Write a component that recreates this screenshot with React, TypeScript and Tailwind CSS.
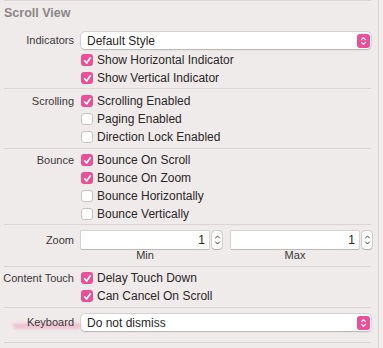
import React from "react";

const FONT = { fontFamily: '"Liberation Sans", Arial, sans-serif' };

function Check({ on }: { on: boolean }) {
  if (on) {
    return (
      <span className="flex h-[12px] w-[12px] shrink-0 items-center justify-center rounded-[3px] bg-[#eb4f97]">
        <svg width="9" height="9" viewBox="0 0 9 9">
          <path d="M1.6 4.8 L3.6 7 L7.4 1.8" fill="none" stroke="#fff" strokeWidth="1.7" strokeLinecap="round" strokeLinejoin="round" />
        </svg>
      </span>
    );
  }
  return <span className="h-[12px] w-[12px] shrink-0 rounded-[3px] border border-[#c9c4c4] bg-white shadow-[inset_0_0.5px_0_rgba(0,0,0,0.05)]" />;
}

function Row({ label, children, h = "h-[18px]" }: { label?: string; children: React.ReactNode; h?: string }) {
  return (
    <div className={`flex ${h} items-center`}>
      <div className="w-[75px] shrink-0 pr-[1px] text-right text-[11px] text-[#3b3838]">{label}</div>
      <div className="ml-[6px] flex flex-1 items-center">{children}</div>
    </div>
  );
}

function CheckRow({ label, text, on }: { label?: string; text: string; on: boolean }) {
  return (
    <Row label={label}>
      <Check on={on} />
      <span className="ml-[4px] text-[12px] text-[#2a2727]">{text}</span>
    </Row>
  );
}

function PinkStepper() {
  return (
    <span className="flex h-[14px] w-[13px] items-center justify-center rounded-[3px] bg-[#eb4f97]">
      <svg width="7" height="10" viewBox="0 0 7 10">
        <path d="M1.5 3.6 L3.5 1.6 L5.5 3.6" fill="none" stroke="#fff" strokeWidth="1.2" strokeLinecap="round" strokeLinejoin="round" />
        <path d="M1.5 6.4 L3.5 8.4 L5.5 6.4" fill="none" stroke="#fff" strokeWidth="1.2" strokeLinecap="round" strokeLinejoin="round" />
      </svg>
    </span>
  );
}

function Popup({ text }: { text: string }) {
  return (
    <div className="flex h-[17px] w-[290px] items-center justify-between rounded-[4px] bg-white pl-[6px] pr-[1.5px] shadow-[0_0_0_0.5px_rgba(0,0,0,0.14),0_0.5px_1.5px_rgba(0,0,0,0.18)]">
      <span className="text-[12px] text-[#2a2727]">{text}</span>
      <PinkStepper />
    </div>
  );
}

function SmallStepper() {
  return (
    <span className="flex h-[18px] w-[10px] flex-col items-center justify-center rounded-[3px] bg-white shadow-[0_0_0_0.5px_rgba(0,0,0,0.22),0_0.5px_1px_rgba(0,0,0,0.15)]">
      <svg width="7" height="14" viewBox="0 0 7 14">
        <path d="M1.5 5 L3.5 3 L5.5 5" fill="none" stroke="#444" strokeWidth="1" strokeLinecap="round" strokeLinejoin="round" />
        <path d="M1.5 9 L3.5 11 L5.5 9" fill="none" stroke="#444" strokeWidth="1" strokeLinecap="round" strokeLinejoin="round" />
      </svg>
    </span>
  );
}

function NumField({ caption }: { caption: string }) {
  return (
    <div className="flex flex-col">
      <div className="flex items-center">
        <div className="flex h-[18px] w-[128px] items-center justify-end bg-white pr-[4px] text-[12px] text-[#2a2727] shadow-[0_0_0_0.5px_rgba(0,0,0,0.2),0_0.5px_0_rgba(0,0,0,0.25)]">
          1
        </div>
        <div className="ml-[3px]">
          <SmallStepper />
        </div>
      </div>
      <div className="flex h-[12px] w-[128px] items-center justify-center text-[11px] leading-[12px] text-[#3b3838]">{caption}</div>
    </div>
  );
}

function Sep() {
  return <div className="ml-[4px] h-px w-[367px] bg-[#dbd5d5]" />;
}

export default function App() {
  return (
    <div className="flex h-[348px] w-[383px] overflow-hidden bg-[#f0ebeb]" style={FONT}>
      <div className="flex h-full w-[379px] flex-col border-r border-[#dcd6d6]">
        <Sep />
        <div className="h-[30px] pl-[4px] pt-[4px] text-[12.5px] font-bold leading-[16px] text-[#8b8787]">Scroll View</div>
        <div className="flex h-[20px] items-start pt-[1px]">
          <div className="w-[75px] shrink-0 pr-[1px] text-right text-[11px] leading-[17px] text-[#3b3838]">Indicators</div>
          <div className="ml-[6px]">
            <Popup text="Default Style" />
          </div>
        </div>
        <CheckRow text="Show Horizontal Indicator" on />
        <CheckRow text="Show Vertical Indicator" on />
        <div className="h-[1px]" />
        <Sep />
        <div className="flex flex-col pb-[2px] pt-[3px]">
          <CheckRow label="Scrolling" text="Scrolling Enabled" on />
          <CheckRow text="Paging Enabled" on={false} />
          <CheckRow text="Direction Lock Enabled" on={false} />
        </div>
        <Sep />
        <div className="flex flex-col pb-[1px] pt-[2px]">
          <CheckRow label="Bounce" text="Bounce On Scroll" on />
          <CheckRow text="Bounce On Zoom" on />
          <CheckRow text="Bounce Horizontally" on={false} />
          <CheckRow text="Bounce Vertically" on={false} />
        </div>
        <Sep />
        <div className="flex pb-[5px] pt-[6px]">
          <div className="flex h-[18px] w-[75px] shrink-0 items-center justify-end pr-[1px] text-[11px] text-[#3b3838]">Zoom</div>
          <div className="ml-[6px] flex gap-[9px]">
            <NumField caption="Min" />
            <NumField caption="Max" />
          </div>
        </div>
        <Sep />
        <div className="flex flex-col pb-[2px] pt-[2px]">
          <CheckRow label="Content Touch" text="Delay Touch Down" on />
          <CheckRow text="Can Cancel On Scroll" on />
        </div>
        <Sep />
        <div className="flex h-[34px] items-start pt-[6px]">
          <div className="relative flex h-[17px] w-[75px] shrink-0 items-center justify-end pr-[1px] text-[11px] text-[#3b3838]">
            <span className="absolute left-[13px] top-[9px] h-[6px] w-[68px] rounded-full bg-[rgba(240,160,190,0.55)] blur-[1.5px]" />
            <span className="relative">Keyboard</span>
          </div>
          <div className="ml-[6px]">
            <Popup text="Do not dismiss" />
          </div>
        </div>
        <Sep />
      </div>
      <div className="h-full flex-1 bg-[#f3eeee]" />
    </div>
  );
}
